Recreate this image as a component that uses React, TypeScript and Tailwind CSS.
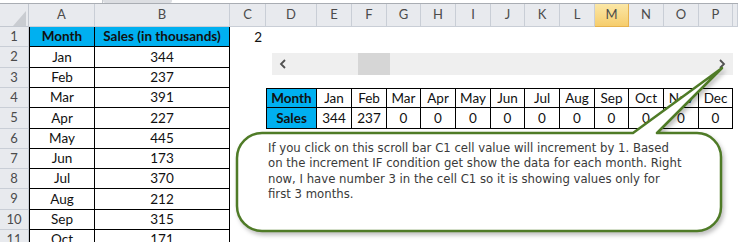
const letters = ["A", "B", "C", "D", "E", "F", "G", "H", "I", "J", "K", "L", "M", "N", "O", "P", ""];

const colA = ["Month", "Jan", "Feb", "Mar", "Apr", "May", "Jun", "Jul", "Aug", "Sep", "Oct"];
const colB = ["Sales (in thousands)", "344", "237", "391", "227", "445", "173", "370", "212", "315", "171"];

const months = ["Month", "Jan", "Feb", "Mar", "Apr", "May", "Jun", "Jul", "Aug", "Sep", "Oct", "Nov", "Dec"];
const sales = ["Sales", "344", "237", "0", "0", "0", "0", "0", "0", "0", "0", "0", "0"];

function HeaderRow() {
  return (
    <>
      <div className="relative border-r border-b border-[#c3c8d0] bg-[#e8eaee]">
        <svg className="absolute left-[13px] top-[7px]" width="13" height="15" viewBox="0 0 13 15">
          <polygon points="13,0 13,15 0,15" fill="#c9ccd1" />
        </svg>
      </div>
      {letters.map((l, i) =>
        l === "M" ? (
          <div
            key={i}
            className="flex items-center justify-center border-r border-b border-[#e6b24e] bg-gradient-to-b from-[#fbe7a6] to-[#f6cd6c] text-[13px] text-[#4b4b4b]"
          >
            {l}
          </div>
        ) : (
          <div
            key={i}
            className="flex items-center justify-center border-r border-b border-[#c9ced6] bg-[#e8eaee] text-[13px] text-[#4b4b4b]"
          >
            {l}
          </div>
        )
      )}
    </>
  );
}

function DataRow({ r }: { r: number }) {
  const cells = [];
  // row number
  cells.push(
    <div key="h" className="flex items-center justify-center border-r border-b border-[#c9ced6] bg-[#e8eaee] text-[13px] text-[#4b4b4b]">
      {r}
    </div>
  );
  // A
  cells.push(
    <div
      key="a"
      className={
        r === 1
          ? "flex items-center justify-center border-l border-r border-b border-black bg-[#00b0f0] font-bold"
          : "flex items-center justify-center border-l border-r border-b border-black bg-white"
      }
    >
      {colA[r - 1]}
    </div>
  );
  // B
  cells.push(
    <div
      key="b"
      className={
        r === 1
          ? "flex items-center justify-center border-r border-b border-black bg-[#00b0f0] font-bold"
          : "flex items-center justify-center border-r border-b border-black bg-white"
      }
    >
      {colB[r - 1]}
    </div>
  );
  // C
  cells.push(
    <div key="c" className="flex items-center justify-end pr-[4px] bg-white">
      {r === 1 ? "2" : ""}
    </div>
  );
  // D..P
  for (let i = 0; i < 13; i++) {
    if (r === 4 || r === 5) {
      const list = r === 4 ? months : sales;
      let cls = "flex items-center justify-center border-r border-b border-black";
      if (r === 4) cls += " border-t";
      if (i === 0) cls += " border-l bg-[#00b0f0] font-bold";
      else cls += " bg-white";
      cells.push(
        <div key={"m" + i} className={cls}>
          {list[i]}
        </div>
      );
    } else {
      cells.push(<div key={"m" + i} className="bg-white" />);
    }
  }
  cells.push(<div key="q" className="bg-white" />);
  return <>{cells}</>;
}

function Scrollbar() {
  return (
    <div className="absolute left-[272px] top-[53px] flex h-[22px] w-[461px] items-center bg-[#efefef]">
      <svg className="ml-[7px]" width="8" height="10" viewBox="0 0 8 10">
        <polyline points="6,1 2,5 6,9" fill="none" stroke="#505050" strokeWidth="1.8" />
      </svg>
      <div className="ml-[71px] h-[22px] w-[32px] bg-[#d6d6d6]" />
      <div className="flex-1" />
      <svg className="mr-[7px]" width="8" height="10" viewBox="0 0 8 10">
        <polyline points="2,1 6,5 2,9" fill="none" stroke="#505050" strokeWidth="1.8" />
      </svg>
    </div>
  );
}

function Callout() {
  return (
    <>
      <svg
        className="pointer-events-none absolute left-0 top-0 drop-shadow-[2px_3px_2px_rgba(0,0,0,0.25)]"
        width="738"
        height="242"
        viewBox="0 0 738 242"
      >
        <path
          d="M 262 133 L 633 133 L 722 68 L 657 133 L 697 133 A 24 24 0 0 1 721 157 L 721 207 A 24 24 0 0 1 697 231 L 262 231 A 25 25 0 0 1 237 206 L 237 158 A 25 25 0 0 1 262 133 Z"
          fill="#ffffff"
          stroke="#4f7b27"
          strokeWidth="2.5"
          strokeLinejoin="round"
        />
      </svg>
      <div className="absolute left-[268px] top-[141px] whitespace-nowrap [font-family:'DejaVu_Sans',sans-serif] text-[11.7px] leading-[15.3px] text-[#3a3a3a]">
        <div>If you click on this scroll bar C1 cell value will increment by 1. Based</div>
        <div>on the increment IF condition get show the data for each month. Right</div>
        <div>now, I have number 3 in the cell C1 so it is showing values only for</div>
        <div>first 3 months.</div>
      </div>
    </>
  );
}

export default function App() {
  const rows = [1, 2, 3, 4, 5, 6, 7, 8, 9, 10, 11];
  return (
    <div className="relative h-[242px] w-[738px] overflow-hidden bg-white [font-family:Lato,'Liberation_Sans',sans-serif] text-[13.5px] text-[#111]">
      <div className="flex h-[4px] border-b border-[#a9adb3] bg-white">
        <div className="h-[3px] w-[103px] border-r border-[#c5c9ce] bg-white" />
        <div className="h-[3px] w-[69px] rounded-b-[2px] bg-[#dcdee2]" />
      </div>
      <div className="grid grid-cols-[29px_66px_135px_36px_51px_35px_35px_34px_35px_35px_34px_35px_35px_34px_35px_35px_34px_1fr] grid-rows-[23px_20px_21px_20px_20px_21px_20px_20px_20px_21px_20px_20px]">
        <HeaderRow />
        {rows.map((r) => (
          <DataRow key={r} r={r} />
        ))}
      </div>
      <Scrollbar />
      <Callout />
    </div>
  );
}
